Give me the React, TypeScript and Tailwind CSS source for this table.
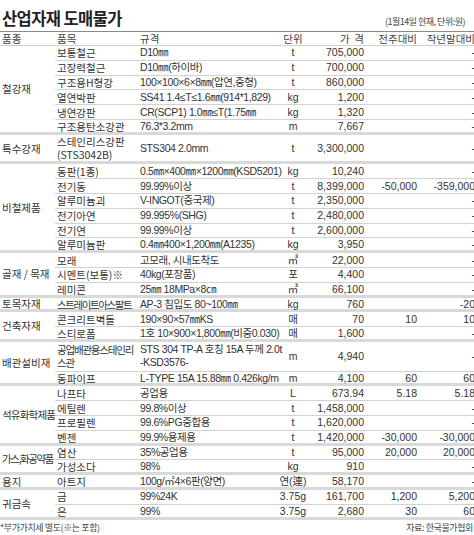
type Row = {
  item: string;
  item2?: string;
  spec: string;
  spec2?: string;
  unit: string;
  price: string;
  week?: string;
  year?: string;
  itemClass?: string;
};

type Group = { name: string; nameClass?: string; rows: Row[] };

const groups: Group[] = [
  {
    name: "철강재",
    rows: [
      { item: "보통철근", spec: "D10㎜", unit: "t", price: "705,000", year: "-" },
      { item: "고장력철근", spec: "D10㎜(하이바)", unit: "t", price: "700,000", year: "-" },
      { item: "구조용H형강", spec: "100×100×6×8㎜(압연,중형)", unit: "t", price: "860,000", year: "-" },
      { item: "열연박판", spec: "SS41 1.4≤T≤1.6㎜(914*1,829)", unit: "kg", price: "1,200", year: "-" },
      { item: "냉연강판", spec: "CR(SCP1) 1.0㎜≤T(1.75㎜", unit: "kg", price: "1,320", year: "-" },
      { item: "구조용탄소강관", spec: "76.3*3.2mm", unit: "m", price: "7,667", year: "-" },
    ],
  },
  {
    name: "특수강재",
    rows: [
      { item: "스테인리스강판", item2: "(STS3042B)", spec: "STS304 2.0mm", unit: "t", price: "3,300,000", year: "-" },
    ],
  },
  {
    name: "비철제품",
    rows: [
      { item: "동판(1종)", spec: "0.5㎜×400㎜×1200㎜(KSD5201)", unit: "kg", price: "10,240", year: "-" },
      { item: "전기동", spec: "99.99%이상", unit: "t", price: "8,399,000", week: "-50,000", year: "-359,000" },
      { item: "알루미늄괴", spec: "V-INGOT(중국제)", unit: "t", price: "2,350,000", year: "-" },
      { item: "전기아연", spec: "99.995%(SHG)", unit: "t", price: "2,480,000", year: "-" },
      { item: "전기연", spec: "99.99%이상", unit: "t", price: "2,600,000", year: "-" },
      { item: "알루미늄판", spec: "0.4㎜400×1,200㎜(A1235)", unit: "kg", price: "3,950", year: "-" },
    ],
  },
  {
    name: "골재 / 목재",
    rows: [
      { item: "모래", spec: "고모래, 시내도착도", unit: "㎥", price: "22,000", year: "-" },
      { item: "시멘트(보통)※", spec: "40kg(포장품)", unit: "포", price: "4,400", year: "-" },
      { item: "레미콘", spec: "25㎜ 18MPa×8㎝", unit: "㎥", price: "66,100", year: "-" },
    ],
  },
  {
    name: "토목자재",
    rows: [
      {
        item: "스트레이트아스팔트",
        itemClass: "tracking-[-1.4px]",
        spec: "AP-3 침입도 80~100㎜",
        unit: "kg",
        price: "760",
        year: "-20",
      },
    ],
  },
  {
    name: "건축자재",
    rows: [
      { item: "콘크리트벽돌", spec: "190×90×57㎜KS", unit: "매", price: "70", week: "10", year: "10" },
      { item: "스티로폼", spec: "1호 10×900×1,800㎜(비중0.030)", unit: "매", price: "1,600", year: "-" },
    ],
  },
  {
    name: "배관설비재",
    rows: [
      {
        item: "공업배관용스테인리",
        item2: "스관",
        itemClass: "tracking-[-1.2px]",
        spec: "STS 304 TP-A 호칭 15A 두께 2.0t",
        spec2: "-KSD3576-",
        unit: "m",
        price: "4,940",
        year: "-",
      },
      { item: "동파이프", spec: "L-TYPE 15A 15.88㎜ 0.426kg/m", unit: "m", price: "4,100", week: "60", year: "60" },
    ],
  },
  {
    name: "석유화학제품",
    nameClass: "tracking-[-0.8px]",
    rows: [
      { item: "나프타", spec: "공업용", unit: "L", price: "673.94", week: "5.18", year: "5.18" },
      { item: "에틸렌", spec: "99.8%이상", unit: "t", price: "1,458,000", year: "-" },
      { item: "프로필렌", spec: "99.6%PG중합용", unit: "t", price: "1,620,000", year: "-" },
      { item: "벤젠", spec: "99.9%용제용", unit: "t", price: "1,420,000", week: "-30,000", year: "-30,000" },
    ],
  },
  {
    name: "가스,화공약품",
    nameClass: "tracking-[-1.4px]",
    rows: [
      { item: "염산", spec: "35%공업용", unit: "t", price: "95,000", week: "20,000", year: "20,000" },
      { item: "가성소다", spec: "98%", unit: "kg", price: "910", year: "-" },
    ],
  },
  {
    name: "용지",
    rows: [{ item: "아트지", spec: "100g/㎡4×6판(양면)", unit: "연(連)", price: "58,170", year: "-" }],
  },
  {
    name: "귀금속",
    rows: [
      { item: "금", spec: "99%24K", unit: "3.75g", price: "161,700", week: "1,200", year: "5,200" },
      { item: "은", spec: "99%", unit: "3.75g", price: "2,680", week: "30", year: "60" },
    ],
  },
];

const latin = "'Liberation Sans','Noto Sans CJK KR',sans-serif";
const korean = "'Noto Sans CJK KR','Liberation Sans',sans-serif";

function ItemRow({ row, last }: { row: Row; last: boolean }) {
  const tall = !!row.item2;
  const height = tall ? (last ? "h-[26.6px]" : "h-[29.6px]") : last ? "h-[11.8px]" : "h-[14.8px]";
  return (
    <div
      className={`grid grid-cols-[85px_130px_46px_48px_54px_57px] items-center whitespace-nowrap leading-[13px] ${height} ${
        last ? "" : "border-b-[1.5px] border-[#d2d2d2]"
      }`}
    >
      <div className={`pl-[2px] text-[10.5px] ${row.itemClass ?? ""}`} style={{ fontFamily: korean }}>
        <div>{row.item}</div>
        {row.item2 && <div>{row.item2}</div>}
      </div>
      <div className="text-[10.5px] tracking-[-0.4px]" style={{ fontFamily: latin }}>
        <div>{row.spec}</div>
        {row.spec2 && <div>{row.spec2}</div>}
      </div>
      <div className="text-center text-[10.5px]" style={{ fontFamily: latin }}>
        {row.unit}
      </div>
      <div className="text-right text-[10.5px]" style={{ fontFamily: latin }}>
        {row.price}
      </div>
      <div className="text-right text-[10.5px] pr-[1px]" style={{ fontFamily: latin }}>
        {row.week}
      </div>
      <div className="text-right text-[10.5px]" style={{ fontFamily: latin }}>
        {row.year}
      </div>
    </div>
  );
}

export default function App() {
  return (
    <div className="w-[474px] h-[535px] overflow-hidden bg-white text-[#333]">
      <div className="flex items-end justify-between h-[31px] pb-[5px] pl-[2px] pr-[9px]">
        <h1 className="text-[16.5px] font-bold leading-none tracking-[-0.6px] text-[#222]" style={{ fontFamily: korean }}>
          산업자재 도매물가
        </h1>
        <span className="text-[9px] leading-none tracking-[-0.5px] text-[#444]" style={{ fontFamily: korean }}>
          (1월14일 현재, 단위:원)
        </span>
      </div>
      <div className="w-[475px]">
        <div
          className="grid grid-cols-[55px_85px_130px_46px_48px_54px_57px] items-center h-[15px] leading-[13px] border-t border-b border-t-[#8a8a8a] border-b-[#cfcfcf] text-[10.5px] text-[#444] whitespace-nowrap"
          style={{ fontFamily: korean }}
        >
          <div className="pl-[2px]">품종</div>
          <div className="pl-[2px]">품목</div>
          <div>규격</div>
          <div className="text-center">단위</div>
          <div className="text-right">가&nbsp;&nbsp;격</div>
          <div className="text-right pr-[1px]">전주대비</div>
          <div className="text-right">작년말대비</div>
        </div>
        {groups.map((g) => (
          <div key={g.name} className="flex border-b-[3px] border-[#d9d9d9]">
            <div
              className={`w-[55px] shrink-0 flex items-center pl-[2px] text-[10.5px] leading-[11px] whitespace-nowrap ${g.nameClass ?? ""}`}
              style={{ fontFamily: korean }}
            >
              {g.name}
            </div>
            <div className="flex-1">
              {g.rows.map((r, i) => (
                <ItemRow key={r.item} row={r} last={i === g.rows.length - 1} />
              ))}
            </div>
          </div>
        ))}
      </div>
      <div
        className="flex justify-between items-center h-[16px] pr-[1px] text-[9px] leading-none tracking-[-0.4px] text-[#444]"
        style={{ fontFamily: korean }}
      >
        <span>*부가가치세 별도(※는 포함)</span>
        <span>자료: 한국물가협회</span>
      </div>
    </div>
  );
}
